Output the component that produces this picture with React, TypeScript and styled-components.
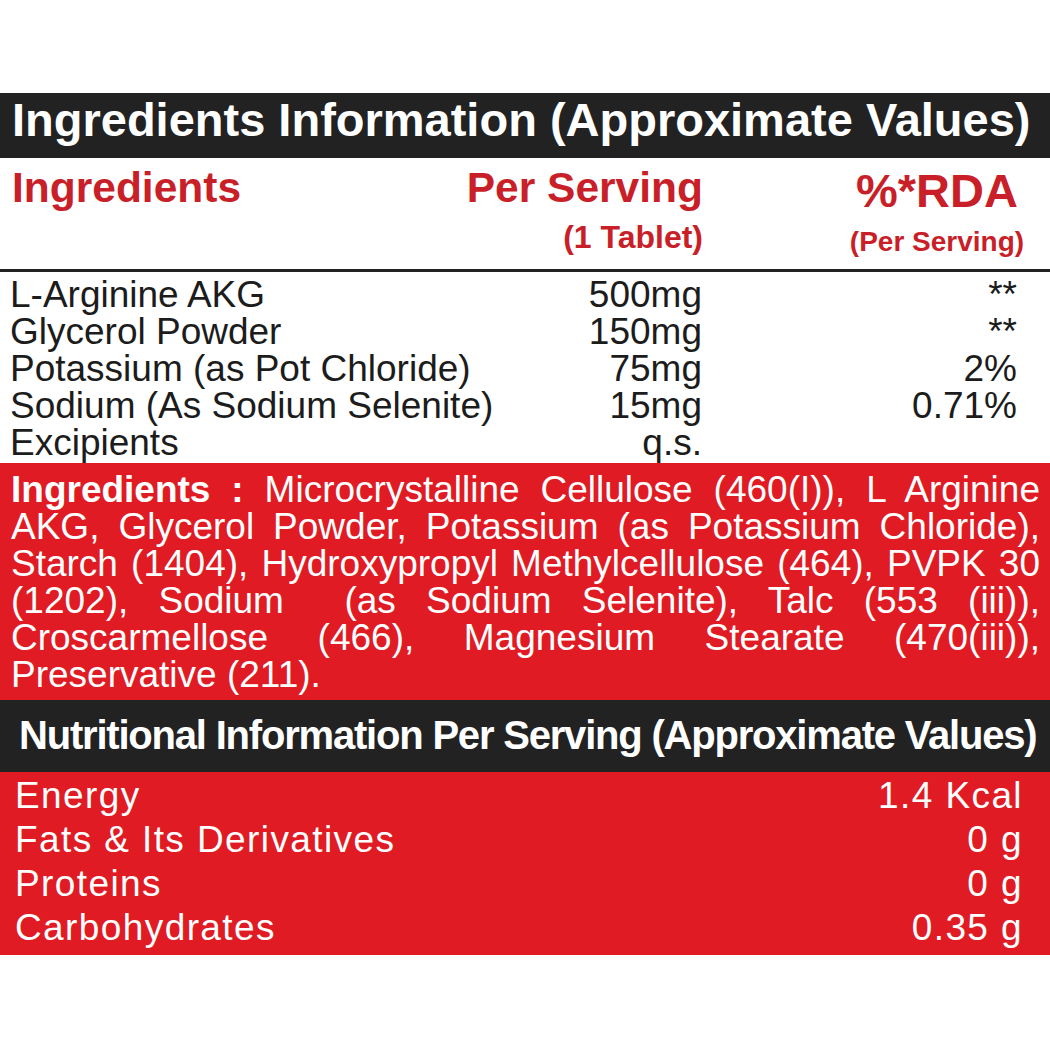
import React from "react";
import styled, { createGlobalStyle } from "styled-components";

const GlobalStyle = createGlobalStyle`
  html, body {
    margin: 0;
    padding: 0;
    background: #ffffff;
  }
  body {
    font-family: "Liberation Sans", Arial, Helvetica, sans-serif;
  }
  * { box-sizing: border-box; }
`;

const RED = "#e11b23";
const DARK = "#222222";
const HEAD_RED = "#c91f29";

const Page = styled.div`
  width: 1050px;
  padding-top: 93px;
  font-family: "Liberation Sans", Arial, Helvetica, sans-serif;
`;

const TitleBar = styled.div<{ $compact?: boolean }>`
  background: ${DARK};
  color: #ffffff;
  font-weight: 700;
  line-height: 1;
  white-space: nowrap;
  overflow: hidden;
  height: ${(p) => (p.$compact ? "72px" : "65px")};
  padding: ${(p) => (p.$compact ? "15px 0 0 19px" : "3px 0 0 12px")};
  font-size: ${(p) => (p.$compact ? "40px" : "47px")};
  letter-spacing: ${(p) => (p.$compact ? "-1.2px" : "0")};
`;

const HeaderGrid = styled.div`
  display: grid;
  grid-template-columns: minmax(0, 1fr) 260px 347px;
  padding: 9px 0 0 12px;
  height: 114px;
  border-bottom: 3px solid ${DARK};
  color: ${HEAD_RED};
  font-weight: 700;
  line-height: 1;
`;

const HeadName = styled.div`
  font-size: 42.5px;
  white-space: nowrap;
`;

const HeadServing = styled.div`
  display: flex;
  flex-direction: column;
  align-items: flex-end;
  font-size: 42.5px;
  white-space: nowrap;
`;

const HeadRda = styled.div`
  justify-self: end;
  margin-right: 26px;
  width: 174px;
  display: flex;
  flex-direction: column;
  align-items: center;
  font-size: 47px;
  white-space: nowrap;
`;

const SubHead = styled.span<{ $size: number; $gap: number }>`
  font-size: ${(p) => p.$size}px;
  margin-top: ${(p) => p.$gap}px;
`;

const RowsBlock = styled.div`
  padding: 4px 0 2px 10px;
  color: #1c1c1c;
  font-size: 37px;
  line-height: 37px;
`;

const DataRow = styled.div`
  display: grid;
  grid-template-columns: minmax(0, 1fr) 260px 347px;
  white-space: nowrap;
`;

const Cell = styled.span<{ $align?: "left" | "right"; $pad?: number }>`
  text-align: ${(p) => p.$align || "left"};
  padding-right: ${(p) => p.$pad || 0}px;
`;

const IngredientsPara = styled.div`
  background: ${RED};
  color: #ffffff;
  font-size: 37px;
  line-height: 37px;
  padding: 8px 10px 7px 11px;
`;

const ParaLine = styled.span<{ $last?: boolean }>`
  display: block;
  text-align: ${(p) => (p.$last ? "left" : "justify")};
  text-align-last: ${(p) => (p.$last ? "left" : "justify")};
`;

const Bold = styled.b`
  font-weight: 700;
`;

const NutriBlock = styled.div`
  background: ${RED};
  color: #ffffff;
  font-size: 37px;
  line-height: 44px;
  letter-spacing: 1.4px;
  padding: 2px 27px 5px 15px;
`;

const NutriRow = styled.div`
  display: flex;
  justify-content: space-between;
  white-space: nowrap;
`;

const ingredients = [
  { name: "L-Arginine AKG", amount: "500mg", rda: "**" },
  { name: "Glycerol Powder", amount: "150mg", rda: "**" },
  { name: "Potassium (as Pot Chloride)", amount: "75mg", rda: "2%" },
  { name: "Sodium (As Sodium Selenite)", amount: "15mg", rda: "0.71%" },
  { name: "Excipients", amount: "q.s.", rda: "" },
];

const paraLines = [
  "AKG, Glycerol Powder, Potassium (as Potassium Chloride),",
  "Starch (1404), Hydroxypropyl Methylcellulose (464), PVPK 30",
  "(1202), Sodium \u00a0(as Sodium Selenite), Talc (553 (iii)),",
  "Croscarmellose (466), Magnesium Stearate (470(iii)),",
];

const nutrition = [
  { name: "Energy", value: "1.4 Kcal" },
  { name: "Fats & Its Derivatives", value: "0 g" },
  { name: "Proteins", value: "0 g" },
  { name: "Carbohydrates", value: "0.35 g" },
];

export default function App() {
  return (
    <>
      <GlobalStyle />
      <Page>
        <TitleBar>Ingredients Information (Approximate Values)</TitleBar>
        <HeaderGrid>
          <HeadName>Ingredients</HeadName>
          <HeadServing>
            <span>Per Serving</span>
            <SubHead $size={32} $gap={11}>(1 Tablet)</SubHead>
          </HeadServing>
          <HeadRda>
            <span>%*RDA</span>
            <SubHead $size={28} $gap={14}>(Per Serving)</SubHead>
          </HeadRda>
        </HeaderGrid>
        <RowsBlock>
          {ingredients.map((r) => (
            <DataRow key={r.name}>
              <Cell>{r.name}</Cell>
              <Cell $align="right" $pad={1}>{r.amount}</Cell>
              <Cell $align="right" $pad={33}>{r.rda}</Cell>
            </DataRow>
          ))}
        </RowsBlock>
        <IngredientsPara>
          <ParaLine>
            <Bold>Ingredients :</Bold> Microcrystalline Cellulose (460(I)), L Arginine
          </ParaLine>
          {paraLines.map((l) => (
            <ParaLine key={l}>{l}</ParaLine>
          ))}
          <ParaLine $last>Preservative (211).</ParaLine>
        </IngredientsPara>
        <TitleBar $compact>
          Nutritional Information Per Serving (Approximate Values)
        </TitleBar>
        <NutriBlock>
          {nutrition.map((n) => (
            <NutriRow key={n.name}>
              <span>{n.name}</span>
              <span>{n.value}</span>
            </NutriRow>
          ))}
        </NutriBlock>
      </Page>
    </>
  );
}
